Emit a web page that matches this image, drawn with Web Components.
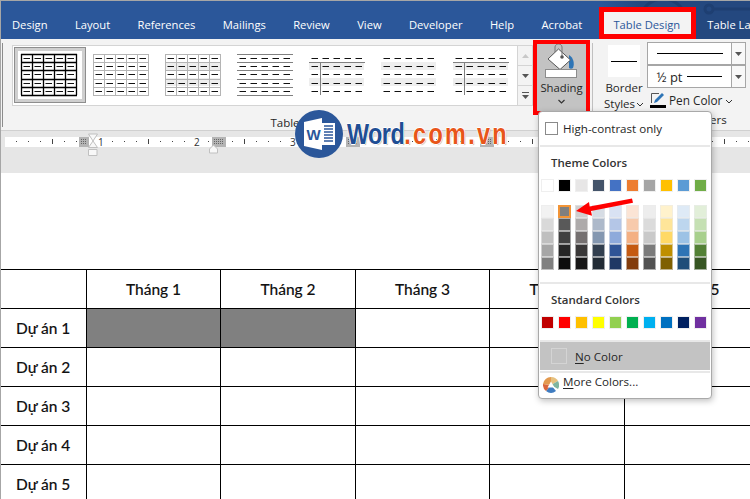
<!DOCTYPE html>
<html lang="vi">
<head>
<meta charset="utf-8">
<title>Table Design - Shading</title>
<style>
  html, body { margin: 0; padding: 0; background: #fff; overflow: hidden; }
  body { width: 750px; height: 499px; font-family: "Open Sans", "Noto Sans", sans-serif; }
</style>
</head>
<body>
<word-app>
  <ribbon-tabs>
    <ribbon-tab>Design</ribbon-tab>
    <ribbon-tab>Layout</ribbon-tab>
    <ribbon-tab>References</ribbon-tab>
    <ribbon-tab>Mailings</ribbon-tab>
    <ribbon-tab>Review</ribbon-tab>
    <ribbon-tab>View</ribbon-tab>
    <ribbon-tab>Developer</ribbon-tab>
    <ribbon-tab>Help</ribbon-tab>
    <ribbon-tab>Acrobat</ribbon-tab>
    <ribbon-tab active>Table Design</ribbon-tab>
    <ribbon-tab>Table Layout</ribbon-tab>
  </ribbon-tabs>
  <ribbon-bar></ribbon-bar>
  <doc-ruler></doc-ruler>
  <doc-table></doc-table>
  <shading-menu></shading-menu>
  <site-logo></site-logo>
  <callout-arrow></callout-arrow>
</word-app>

<script>
const UI_FONT = '"Open Sans", "Noto Sans", sans-serif';

class WordApp extends HTMLElement {
  connectedCallback() {
    this.attachShadow({ mode: 'open' });
    this.shadowRoot.innerHTML = `
      <style>
        :host {
          display: flex;
          flex-direction: column;
          position: relative;
          width: 750px;
          height: 499px;
          overflow: hidden;
          box-sizing: border-box;
          border-top: 1px solid #a6a6a6;
          border-left: 1px solid #a6a6a6;
          font-family: ${UI_FONT};
          color: #262626;
        }
      </style>
      <slot></slot>
    `;
  }
}

class RibbonTabs extends HTMLElement {
  connectedCallback() {
    this.attachShadow({ mode: 'open' });
    this.shadowRoot.innerHTML = `
      <style>
        :host {
          display: flex;
          flex: none;
          position: relative;
          height: 38px;
          background: linear-gradient(90deg, #2b579a 0, #2b579a 600px, #24487f 640px, #24487f 100%);
          overflow: hidden;
        }
        .wm { position: absolute; left: 600px; top: 0; }
        .row { display: flex; position: relative; margin-left: -2.700px; }
      </style>
      <svg class="wm" width="149" height="38" viewBox="0 0 149 38">
        <circle cx="62" cy="22" r="24" fill="none" stroke="#1e3f72" stroke-width="3"/>
        <circle cx="108" cy="8" r="4" fill="none" stroke="#1e3f72" stroke-width="3"/>
        <path d="M112 8h40" stroke="#1e3f72" stroke-width="3"/>
      </svg>
      <div class="row"><slot></slot></div>
    `;
  }
}

class RibbonTab extends HTMLElement {
  connectedCallback() {
    this.attachShadow({ mode: 'open' });
    this.shadowRoot.innerHTML = `
      <style>
        :host {
          display: block;
          flex: none;
          box-sizing: border-box;
          height: 27px;
          margin-top: 11px;
          padding: 4px 13.700px 0;
          font-size: 11.200px;
          line-height: 17px;
          color: #fff;
          white-space: nowrap;
        }
        :host([active]) {
          position: relative;
          height: 22px;
          margin-left: 8px;
          margin-right: 2.500px;
          padding: 4px 11px 0 9.500px;
          background: #f3f3f3;
          color: #2b579a;
        }
        :host([active])::after {
          content: '';
          position: absolute;
          left: -5px;
          right: -5px;
          top: -5px;
          bottom: -5px;
          border: 5px solid #f00;
          pointer-events: none;
        }
      </style>
      <slot></slot>
    `;
  }
}

class StyleThumb extends HTMLElement {
  connectedCallback() {
    const kind = this.getAttribute('kind');
    const W = 55, H = 41, cw = 11, ch = 8.2;
    let art = '';
    if (kind === 'banded' || kind === 'light' || kind === 'header') {
      art += `<rect x="0" y="8" width="${W}" height="8" fill="#eee"/><rect x="0" y="24" width="${W}" height="8" fill="#eee"/>`;
    }
    for (let r = 0; r < 5; r++) {
      for (let c = 0; c < 5; c++) {
        const y = Math.round(r * ch) + 4.5;
        art += `<path d="M${c * cw + 2.5} ${y}h6.5" stroke="#111" stroke-width="1"/>`;
      }
    }
    if (kind === 'grid' || kind === 'plain' || kind === 'banded') {
      const col = kind === 'grid' ? '#000' : '#b4b4b4';
      const sw = kind === 'grid' ? 1.3 : 1;
      for (let i = 0; i <= 5; i++) {
        art += `<path d="M${i * cw + .5} 0v${H}" stroke="${col}" stroke-width="${sw}"/>`;
        art += `<path d="M0 ${Math.round(i * ch) + .5}h${W + 1}" stroke="${col}" stroke-width="${sw}"/>`;
      }
    }
    if (kind === 'lines') {
      for (let i = 0; i <= 5; i++) {
        art += `<path d="M0 ${Math.round(i * ch) + .5}h${W + 1}" stroke="#808080"/>`;
      }
    }
    if (kind === 'header') {
      art += `<path d="M0 8.5h${W + 1}M11.5 8v33" stroke="#808080"/>`;
    }
    this.attachShadow({ mode: 'open' });
    this.shadowRoot.innerHTML = `
      <style>
        :host {
          display: flex;
          flex: none;
          width: 72px;
          height: 56px;
          box-sizing: border-box;
          padding: 7px 0 0 7px;
        }
        :host([selected]) {
          border: 1px solid #8e8e8e;
          outline: 3px solid #cfcfcf;
          outline-offset: -4px;
          padding: 6px 0 0 6px;
        }
        svg { display: block; overflow: visible; }
      </style>
      <svg width="57" height="42" viewBox="0 0 57 42">${art}</svg>
    `;
  }
}

class StyleGallery extends HTMLElement {
  connectedCallback() {
    const kinds = ['grid', 'plain', 'banded', 'lines', 'header', 'light', 'header'];
    this.attachShadow({ mode: 'open' });
    this.shadowRoot.innerHTML = `
      <style>
        :host {
          display: flex;
          flex: none;
          box-sizing: border-box;
          width: 521px;
          height: 61px;
          margin-top: 2px;
          background: #fff;
          border: 1px solid #d4d4d4;
        }
        .items { display: flex; width: 505px; padding: 1px 0 0 1px; overflow: hidden; }
        .scroll {
          display: flex;
          flex-direction: column;
          flex: none;
          width: 14px;
          background: #f3f3f3;
          border-left: 1px solid #d4d4d4;
        }
        .scroll div {
          flex: 1;
          display: flex;
          align-items: center;
          justify-content: center;
          border-bottom: 1px solid #d4d4d4;
        }
        .scroll div:last-child { border-bottom: 0; }
      </style>
      <div class="items">
        ${kinds.map((k, i) => `<style-thumb kind="${k}"${i === 0 ? ' selected' : ''}></style-thumb>`).join('')}
      </div>
      <div class="scroll">
        <div><svg width="7" height="4"><path d="M0 4L3.5 0L7 4z" fill="#c8c8c8"/></svg></div>
        <div><svg width="7" height="4"><path d="M0 0L3.5 4L7 0z" fill="#555"/></svg></div>
        <div><svg width="7" height="7"><path d="M0 0h7v1H0zM0 3L3.5 7L7 3z" fill="#555"/></svg></div>
      </div>
    `;
  }
}

class ShadingButton extends HTMLElement {
  connectedCallback() {
    this.attachShadow({ mode: 'open' });
    this.shadowRoot.innerHTML = `
      <style>
        :host {
          display: flex;
          flex-direction: column;
          align-items: center;
          flex: none;
          box-sizing: border-box;
          width: 57px;
          height: 75px;
          margin-top: -3px;
          border: 4px solid #f00;
          background: #c3c3c3;
          font-size: 11.300px;
          line-height: 15px;
          color: #262626;
        }
        svg { display: block; flex: none; }
        .label { margin-top: 2px; }
      </style>
      <svg width="49" height="34" viewBox="0 0 49 34">
        <path d="M32 11c4 2 6 8 4 13c-1 1-3 1-4 0z" fill="#2e75b6"/>
        <path d="M21.500 5L33.500 16L23 25.500L11 15z" fill="#fff" stroke="#555" stroke-width="1"/>
        <path d="M18 8V3c0-2 2-3 3.500-3s3.500 1 3.500 3v9" fill="none" stroke="#777" stroke-width="1"/>
        <circle cx="25" cy="13" r="1.800" fill="#555"/>
        <rect x="8.500" y="25.500" width="31" height="8" fill="#fff" stroke="#8c8c8c"/>
      </svg>
      <div class="label">Shading</div>
      <svg style="margin-top:1px" width="9" height="12" viewBox="0 0 9 12"><path d="M1.500 4l3 3l3-3" fill="none" stroke="#333" stroke-width="1.200"/></svg>
    `;
  }
}

class BorderPanel extends HTMLElement {
  connectedCallback() {
    this.attachShadow({ mode: 'open' });
    this.shadowRoot.innerHTML = `
      <style>
        :host {
          display: flex;
          flex: none;
          box-sizing: border-box;
          margin-top: -1px;
          font-size: 11.500px;
          color: #262626;
        }
        .styles {
          display: flex;
          flex-direction: column;
          align-items: center;
          width: 48px;
          line-height: 16px;
          margin: 0 -1px 0 7px;
        }
        .preview {
          width: 32px;
          height: 32px;
          margin: 3px 0;
          background: #fff;
          display: flex;
          align-items: center;
          justify-content: center;
        }
        .preview i { display: block; width: 26px; height: 1px; background: #000; }
        .right { display: flex; flex-direction: column; width: 102px; }
        .combo {
          display: flex;
          box-sizing: border-box;
          width: 99px;
          height: 23px;
          background: #fff;
          border: 1px solid #a6a6a6;
        }
        .field { flex: 1; display: flex; align-items: center; justify-content: center; gap: 5px; line-height: 14px; }
        .field i { display: block; width: 66px; height: 1px; background: #000; }
        .field .short { width: 35px; }
        .field span { font-size: 13px; }
        .drop { width: 13px; border-left: 1px solid #a6a6a6; display: flex; align-items: center; justify-content: center; background: #f8f8f8; }
        .pen { display: flex; align-items: center; gap: 3px; margin: 3px 0 0 3px; line-height: 18px; white-space: nowrap; font-size: 11.800px; }
        .chev { display: inline-block; vertical-align: 1px; margin-left: 1px; }
      </style>
      <div class="styles">
        <div class="preview"><i></i></div>
        <div>Border</div>
        <div style="white-space:nowrap">Styles<svg class="chev" width="8" height="5"><path d="M1 1l3 3l3-3" fill="none" stroke="#333"/></svg></div>
      </div>
      <div class="right">
        <div class="combo">
          <div class="field"><i></i></div>
          <div class="drop"><svg width="7" height="4"><path d="M0 0L3.500 4L7 0z" fill="#555"/></svg></div>
        </div>
        <div class="combo">
          <div class="field"><span>½ pt</span><i class="short"></i></div>
          <div class="drop"><svg width="7" height="4"><path d="M0 0L3.500 4L7 0z" fill="#555"/></svg></div>
        </div>
        <div class="pen">
          <svg width="16" height="16" viewBox="0 0 16 16">
            <path d="M1.500 11V1.500H9" stroke="#555" fill="none"/>
            <path d="M4 11l1-3l7-7l2 2l-7 7z" fill="#2e75b6"/>
            <rect x="0" y="13" width="16" height="3" fill="#000"/>
          </svg>
          <span>Pen Color<svg class="chev" style="margin-left:3px" width="8" height="5"><path d="M1 1l3 3l3-3" fill="none" stroke="#333"/></svg></span>
        </div>
      </div>
    `;
  }
}

class RibbonBar extends HTMLElement {
  connectedCallback() {
    this.attachShadow({ mode: 'open' });
    this.shadowRoot.innerHTML = `
      <style>
        :host {
          display: flex;
          flex: none;
          box-sizing: border-box;
          height: 92px;
          padding-left: 1px;
          background: #f3f3f3;
          border-bottom: 1px solid #d0d0d0;
          font-size: 11.500px;
          color: #262626;
          overflow: hidden;
        }
        .group {
          display: flex;
          flex-direction: column;
          box-sizing: border-box;
          height: 84px;
          margin-top: 4px;
        }
        .one { width: 591px; border-left: 1px solid #8c8c8c; border-right: 1px solid #c0c0c0; padding-left: 9px; }
        .two { width: 156px; }
        .row { display: flex; height: 72px; }
        .label { line-height: 16px; text-align: center; white-space: nowrap; }
        .two .label { text-align: left; padding-left: 91px; }
      </style>
      <div class="group one">
        <div class="row"><style-gallery></style-gallery><shading-button></shading-button></div>
        <div class="label">Table Styles</div>
      </div>
      <div class="group two">
        <div class="row"><border-panel></border-panel></div>
        <div class="label">Borders</div>
      </div>
    `;
  }
}

class DocRuler extends HTMLElement {
  connectedCallback() {
    let art = '';
    // tick marks every 12px with the numbers on the inch marks
    for (let x = 15; x < 750; x += 12) {
      const k = Math.round((x - 15) / 12) % 8;
      if (k === 7) continue;
      art += `<rect x="${x}" y="${k === 3 ? 2 : 4}" width="1" height="${k === 3 ? 5 : 1}" fill="#444"/>`;
    }
    const marks = [[97, '1'], [193, '2'], [289, '3']];
    const hatch = (x, w) => `<rect x="${x}" y="0" width="${w}" height="10" fill="#b4b4b4"/>` +
      `<path d="M${x + 2} 2.500h${w - 4}M${x + 2} 4.500h${w - 4}M${x + 2} 6.500h${w - 4}" stroke="#666" stroke-dasharray="1 1"/>`;
    this.attachShadow({ mode: 'open' });
    this.shadowRoot.innerHTML = `
      <style>
        :host {
          display: block;
          flex: none;
          box-sizing: border-box;
          height: 42px;
          padding-top: 6px;
          background: #e6e6e6;
        }
        svg { display: block; overflow: visible; }
        text { font: 10px ${UI_FONT}; fill: #333; }
      </style>
      <svg width="749" height="10" viewBox="0 0 749 10">
        <rect x="4" width="745" height="10" fill="#fff"/>
        ${art}
        ${hatch(78, 10)}${hatch(211, 14)}${hatch(345, 14)}${hatch(479, 14)}
        ${marks.map(m => `<rect x="${m[0] - 3}" y="0" width="10" height="10" fill="#fff"/><text x="${m[0]}" y="9">${m[1]}</text>`).join('')}
        <path d="M87.500 -3h9l-4.500 7zM87.500 10.500l4.500-6.500l4.500 6.500z M87.500 12.500h8.500v6h-8.500z" fill="#f8f8f8" stroke="#c0c0c0"/>
        <path d="M208.500 12l4-4l4 4v4h-8z" fill="#f8f8f8" stroke="#c0c0c0"/>
      </svg>
    `;
  }
}

class DocTable extends HTMLElement {
  connectedCallback() {
    const heads = ['', 'Tháng 1', 'Tháng 2', 'Tháng 3', 'Tháng 4', 'Tháng 5'];
    const rows = ['Dự án 1', 'Dự án 2', 'Dự án 3', 'Dự án 4', 'Dự án 5'];
    let cells = heads.map(h => `<div class="cell head">${h}</div>`).join('');
    rows.forEach((r, i) => {
      cells += `<div class="cell name">${r}</div>`;
      for (let c = 0; c < 5; c++) {
        cells += `<div class="cell${i === 0 && c < 2 ? ' shaded' : ''}"></div>`;
      }
    });
    this.attachShadow({ mode: 'open' });
    this.shadowRoot.innerHTML = `
      <style>
        :host {
          display: block;
          flex: 1;
          padding-top: 96px;
          background: #fff;
        }
        .grid {
          display: grid;
          grid-template-columns: 86px 134px 135px 134px 135px 135px;
          grid-auto-rows: 39px;
          width: 760px;
          border-top: 1px solid #000;
          font-family: Lato, "Open Sans", sans-serif;
          font-size: 15.500px;
          font-weight: 500;
          -webkit-text-stroke: .1px #111;
          color: #111;
        }
        .cell {
          display: flex;
          align-items: center;
          box-sizing: border-box;
          border-right: 1px solid #000;
          border-bottom: 1px solid #000;
        }
        .head { justify-content: center; }
        .name { padding-left: 15px; }
        .shaded { background: #808080; }
      </style>
      <div class="grid">${cells}</div>
    `;
  }
}

class ColorRow extends HTMLElement {
  connectedCallback() {
    const list = this.getAttribute('colors').split(' ');
    this.attachShadow({ mode: 'open' });
    this.shadowRoot.innerHTML = `
      <style>
        :host { display: flex; gap: 4px; }
        i { display: block; box-sizing: border-box; width: 13px; height: 13px; border: 1px solid #efefef; }
      </style>
      ${list.map(c => `<i style="background:#${c}"></i>`).join('')}
    `;
  }
}

class ShadeColumns extends HTMLElement {
  connectedCallback() {
    const cols = [
      'f2f2f2 d9d9d9 bfbfbf a6a6a6 808080',
      '7f7f7f 595959 404040 262626 0d0d0d',
      'd0cece aeabab 757070 3a3838 171616',
      'd6dce4 adb9ca 8497b0 323f4f 222b35',
      'd9e2f3 b4c6e7 8eaadb 2f5496 1f3864',
      'fbe4d5 f7caac f4b083 c55a11 833c0b',
      'ededed dbdbdb c9c9c9 7b7b7b 525252',
      'fff2cc fee599 ffd966 bf8f00 7f6000',
      'deeaf6 bdd6ee 9cc2e5 2e74b5 1f4e79',
      'e2efd9 c5e0b3 a8d08d 538135 375623'
    ];
    this.attachShadow({ mode: 'open' });
    this.shadowRoot.innerHTML = `
      <style>
        :host { display: flex; gap: 4px; }
        .col { display: flex; flex-direction: column; width: 13px; }
        i { display: block; box-sizing: border-box; width: 13px; height: 13px; border: 1px solid rgba(235,235,235,.6); }
        i.sel { border: 2px solid #f29436; }
      </style>
      ${cols.map((col, ci) => `<div class="col">${col.split(' ').map((c, ri) =>
        `<i class="${ci === 1 && ri === 0 ? 'sel' : ''}" style="background:#${c}"></i>`).join('')}</div>`).join('')}
    `;
  }
}

class ShadingMenu extends HTMLElement {
  connectedCallback() {
    this.attachShadow({ mode: 'open' });
    this.shadowRoot.innerHTML = `
      <style>
        :host {
          display: block;
          position: absolute;
          left: 537px;
          top: 110px;
          box-sizing: border-box;
          width: 174px;
          height: 288px;
          background: #fff;
          border: 1px solid #a9a9a9;
          border-radius: 4px;
          box-shadow: 1px 2px 6px rgba(0,0,0,.25);
          font-size: 11.600px;
          color: #262626;
        }
        .check {
          display: flex;
          align-items: center;
          gap: 5px;
          height: 33px;
          padding-left: 6px;
        }
        .box { display: block; box-sizing: border-box; width: 13px; height: 13px; border: 1px solid #8a8a8a; background: #fff; }
        hr { margin: 0 1px; border: 0; border-top: 2px solid #e8e8e8; }
        h3 {
          margin: 0;
          padding-left: 12px;
          font-size: 11.500px;
          font-weight: 600;
          line-height: 16px;
          color: #333;
        }
        .theme { padding-top: 8px; height: 135px; box-sizing: border-box; }
        .std { padding-top: 8px; height: 56px; box-sizing: border-box; }
        color-row, shade-columns { margin-left: 2px; }
        .theme color-row { margin-top: 8px; }
        shade-columns { margin-top: 13px; }
        .std color-row { margin-top: 8px; }
        .none {
          display: flex;
          align-items: center;
          gap: 8px;
          height: 28px;
          margin: 0 1px 1px;
          padding-left: 11px;
          background: #c3c3c3;
        }
        .swatch { display: block; box-sizing: border-box; width: 16px; height: 16px; border: 1px solid #d4d4d4; }
        .more { display: flex; align-items: flex-start; gap: 4px; height: 20px; padding: 2px 0 0 4px; line-height: 14px; }
        .more svg { margin-top: 2px; flex: none; }
        u { text-underline-offset: 2px; }
      </style>
      <div class="check"><i class="box"></i>High-contrast only</div>
      <hr>
      <div class="theme">
        <h3>Theme Colors</h3>
        <color-row colors="ffffff 000000 e7e6e6 44546a 4472c4 ed7d31 a5a5a5 ffc000 5b9bd5 70ad47"></color-row>
        <shade-columns></shade-columns>
      </div>
      <hr>
      <div class="std">
        <h3>Standard Colors</h3>
        <color-row colors="c00000 ff0000 ffc000 ffff00 92d050 00b050 00b0f0 0070c0 002060 7030a0"></color-row>
      </div>
      <hr>
      <div class="none"><i class="swatch"></i><span><u>N</u>o Color</span></div>
      <hr>
      <div class="more">
        <svg width="16" height="16" viewBox="0 0 16 16">
          <path d="M8 8L8 0A8 8 0 0 1 15 4z" fill="#e6c17f"/>
          <path d="M8 8L15 4A8 8 0 0 1 15 12z" fill="#7fb5a0"/>
          <path d="M8 8L13 14A8 8 0 0 1 3 14z" fill="#3f7cc0"/>
          <path d="M8 8L3 14A8 8 0 0 1 0 7z" fill="#d9663c"/>
          <path d="M8 8L0 7A8 8 0 0 1 8 0z" fill="#e39a4f"/>
          <path d="M8 4.500L11.500 10.500H4.500z" fill="#fff"/>
        </svg>
        <span><u>M</u>ore Colors...</span>
      </div>
    `;
  }
}

class SiteLogo extends HTMLElement {
  connectedCallback() {
    this.attachShadow({ mode: 'open' });
    this.shadowRoot.innerHTML = `
      <style>
        :host {
          display: flex;
          align-items: center;
          position: absolute;
          left: 294px;
          top: 109px;
          height: 48px;
          gap: 4px;
        }
        svg { display: block; flex: none; }
        .name {
          font-family: "Liberation Sans", Arial, sans-serif;
          font-weight: 700;
          font-size: 30px;
          line-height: 48px;
          white-space: nowrap;
          color: #1f4e94;
          transform: scaleX(.78);
          transform-origin: left center;
          letter-spacing: -.7px;
          text-shadow: 1px 0 #fff, -1px 0 #fff, 0 1px #fff, 0 -1px #fff, 1px 1px 1px #999;
        }
        .name b { font-weight: 700; color: #e8561a; letter-spacing: 3px; }
      </style>
      <svg width="48" height="48" viewBox="0 0 48 48">
        <circle cx="24" cy="24" r="24" fill="#2b579a"/>
        <path d="M9 12L27 8v32L9 36z" fill="#fff"/>
        <path d="M27 13h13v22H27z" fill="#fff"/>
        <path d="M29 16h9M29 19h9M29 22h9M29 25h9M29 28h9M29 31h9" stroke="#2b579a" stroke-width="1.400"/>
        <text x="11.500" y="30" font-family="Liberation Sans, Arial, sans-serif" font-weight="700" font-size="15" fill="#2b579a">W</text>
      </svg>
      <div class="name">Word<b>.com.vn</b></div>
    `;
  }
}

class CalloutArrow extends HTMLElement {
  connectedCallback() {
    this.attachShadow({ mode: 'open' });
    this.shadowRoot.innerHTML = `
      <style>
        :host { display: block; position: absolute; left: 573px; top: 194px; width: 62px; height: 24px; }
        svg { display: block; }
      </style>
      <svg width="62" height="24" viewBox="0 0 62 24">
        <path d="M2 16L15 7l.7 4.500L58 3.500l1 4.200l-42 8.200l1 4.800z" fill="#f00"/>
      </svg>
    `;
  }
}

customElements.define('word-app', WordApp);
customElements.define('ribbon-tabs', RibbonTabs);
customElements.define('ribbon-tab', RibbonTab);
customElements.define('style-thumb', StyleThumb);
customElements.define('style-gallery', StyleGallery);
customElements.define('shading-button', ShadingButton);
customElements.define('border-panel', BorderPanel);
customElements.define('ribbon-bar', RibbonBar);
customElements.define('doc-ruler', DocRuler);
customElements.define('doc-table', DocTable);
customElements.define('color-row', ColorRow);
customElements.define('shade-columns', ShadeColumns);
customElements.define('shading-menu', ShadingMenu);
customElements.define('site-logo', SiteLogo);
customElements.define('callout-arrow', CalloutArrow);
</script>
</body>
</html>
